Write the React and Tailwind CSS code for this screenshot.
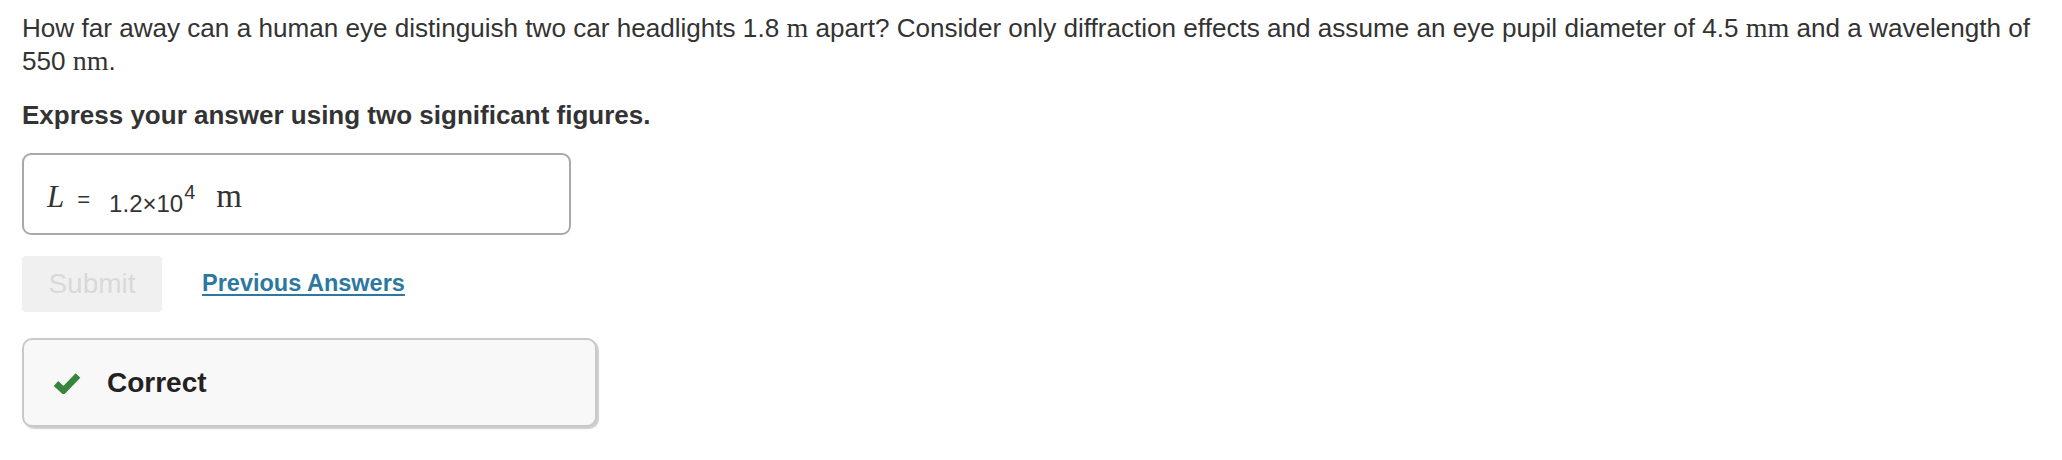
import React from 'react';

const sans = { fontFamily: '"Liberation Sans", Arial, sans-serif' };

const M = ({ children }) => (
  <span className="font-['Liberation_Serif',serif] text-[28px] leading-none">{children}</span>
);

const CheckIcon = () => (
  <svg viewBox="0 0 28 22" className="h-[22px] w-[28px]">
    <path d="M3 11.5 L10.5 18.5 L25 3.5" fill="none" stroke="#35853f" strokeWidth="6.5" strokeLinecap="butt" strokeLinejoin="miter" />
  </svg>
);

export default function App() {
  return (
    <div className="min-h-[460px] bg-white pl-[22px] pr-[20px] pt-[12px] text-[#333]" style={sans}>
      <p className="text-[26.1px] leading-[33px]">
        How far away can a human eye distinguish two car headlights 1.8 <M>m</M> apart? Consider only diffraction effects and
        assume an eye pupil diameter of 4.5 <M>mm</M> and a wavelength of 550 <M>nm</M>.
      </p>

      <p className="mt-[21px] text-[26px] font-bold leading-[33px]">Express your answer using two significant figures.</p>

      <div className="mt-[21px] flex h-[82px] w-[549px] items-center rounded-[9px] border-2 border-[#a9a9a9] pl-[23px]">
        <div className="flex items-baseline pt-[4px]">
          <span className="font-['Liberation_Serif',serif] text-[31px] italic leading-none">L</span>
          <span className="ml-[13px] text-[22px] leading-none">=</span>
          <span className="relative top-[5px] ml-[19px] text-[24px] leading-none">
            1.2×10<sup className="top-[-13px] ml-[1px] text-[20px]">4</sup>
          </span>
          <span className="ml-[21px] font-['Liberation_Serif',serif] text-[33px] leading-none">m</span>
        </div>
      </div>

      <div className="mt-[21px] flex items-center">
        <button
          type="button"
          disabled
          className="h-[56px] w-[140px] rounded-[4px] bg-[#f0f0f0] text-[28px] text-[#d9d9d9]"
        >
          Submit
        </button>
        <a href="#" className="ml-[40px] text-[23.5px] font-bold text-[#2d78a0] underline decoration-2 underline-offset-[3px]">
          Previous Answers
        </a>
      </div>

      <div className="mt-[26px] flex h-[89px] w-[575px] items-center rounded-[10px] border-2 border-[#c9c9c9] bg-[#f8f8f8] pl-[29px] shadow-[2px_2px_1px_#cfcfcf]">
        <CheckIcon />
        <span className="ml-[26px] text-[28px] font-bold text-[#222]">Correct</span>
      </div>
    </div>
  );
}
